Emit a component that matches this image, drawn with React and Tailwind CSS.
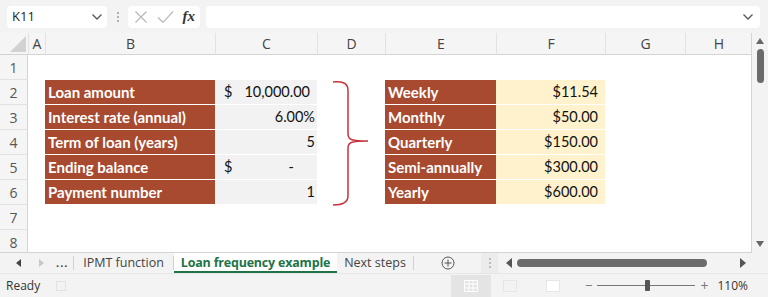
import React from "react";

const COLS = ["A", "B", "C", "D", "E", "F", "G", "H"];
const left = [
  ["Loan amount", "$", "10,000.00"],
  ["Interest rate (annual)", "", "6.00%"],
  ["Term of loan (years)", "", "5"],
  ["Ending balance", "$", "-"],
  ["Payment number", "", "1"],
];
const right = [
  ["Weekly", "$11.54"],
  ["Monthly", "$50.00"],
  ["Quarterly", "$150.00"],
  ["Semi-annually", "$300.00"],
  ["Yearly", "$600.00"],
];

const ui = { fontFamily: '"Open Sans", "Noto Sans", sans-serif' };
const cell = { fontFamily: 'Lato, "Open Sans", sans-serif' };

function Chevron({ className }) {
  return (
    <svg width="12" height="8" viewBox="0 0 12 8" className={className}>
      <path d="M1.5 1.5 L6 6 L10.5 1.5" fill="none" stroke="#555" strokeWidth="1.3" />
    </svg>
  );
}

function TopBar() {
  return (
    <div className="h-[33px] bg-[#f3f3f3] flex items-center pl-[7px] pr-[8px]" style={ui}>
      <div className="w-[100px] h-[22px] bg-white rounded-[4px] flex items-center justify-between pl-[5px] pr-[4px] text-[13px] text-[#222]">
        <span>K11</span>
        <Chevron />
      </div>
      <div className="w-[21px] flex flex-col items-center gap-[2px]">
        <span className="w-[2px] h-[2px] bg-[#999] rounded-full" />
        <span className="w-[2px] h-[2px] bg-[#999] rounded-full" />
        <span className="w-[2px] h-[2px] bg-[#999] rounded-full" />
      </div>
      <div className="w-[72px] h-[22px] bg-white rounded-[4px] flex items-center justify-between pl-[6px] pr-[5px]">
        <svg width="14" height="14" viewBox="0 0 14 14">
          <path d="M1.5 1.5 L12.5 12.5 M12.5 1.5 L1.5 12.5" stroke="#b8b8b8" strokeWidth="1.2" />
        </svg>
        <svg width="17" height="14" viewBox="0 0 17 14">
          <path d="M1 7.5 L6 12.5 L16 1.5" fill="none" stroke="#b8b8b8" strokeWidth="1.2" />
        </svg>
        <span className="text-[15px] italic font-bold text-[#333]" style={{ fontFamily: '"Liberation Serif", serif' }}>
          fx
        </span>
      </div>
      <div className="ml-[6px] flex-1 h-[22px] bg-white rounded-[4px] flex items-center justify-end pr-[6px]">
        <Chevron />
      </div>
    </div>
  );
}

function Sheet() {
  return (
    <div className="flex h-[220px]">
      <div className="relative flex-1 overflow-hidden border-r border-b border-[#d4d4d4]">
        <div className="grid grid-cols-[28px_17px_170px_102px_68px_111px_109px_80px_67px] grid-rows-[22px_repeat(8,25px)]">
          <div className="bg-[#f5f5f5] border-b border-[#d4d4d4] relative">
            <svg width="16" height="16" viewBox="0 0 16 16" className="absolute right-[2px] bottom-[2px]">
              <path d="M16 0 L16 16 L0 16 Z" fill="#d2d2d2" />
            </svg>
          </div>
          {COLS.map((c) => (
            <div
              key={c}
              className="bg-[#f5f5f5] border-b border-l border-[#e2e2e2] border-b-[#d4d4d4] flex items-center justify-center text-[14px] text-[#444]"
              style={ui}
            >
              {c}
            </div>
          ))}
          {Array.from({ length: 8 }).map((_, r) => {
            const row = r + 1;
            const li = row - 2;
            const hasData = li >= 0 && li < 5;
            return (
              <React.Fragment key={row}>
                <div
                  className="bg-[#f5f5f5] border-b border-r border-[#e2e2e2] border-r-[#d4d4d4] flex items-center justify-center text-[14px] text-[#555]"
                  style={ui}
                >
                  {row}
                </div>
                <div />
                {hasData ? (
                  <>
                    <div
                      className="bg-[#a84a2f] border-b border-white text-white font-bold text-[15px] flex items-center pl-[3px] whitespace-nowrap"
                      style={cell}
                    >
                      {left[li][0]}
                    </div>
                    <div
                      className="bg-[#f2f2f2] border-b border-white text-[#111] text-[14.5px] flex items-center justify-between pl-[9px] pr-[2px]"
                      style={cell}
                    >
                      <span>{left[li][1]}</span>
                      <span className={left[li][2] === "-" ? "pr-[21px]" : left[li][2] === "10,000.00" ? "pr-[5px]" : ""}>
                        {left[li][2]}
                      </span>
                    </div>
                    <div />
                    <div
                      className="bg-[#a84a2f] border-b border-white text-white font-bold text-[15px] flex items-center pl-[3px] whitespace-nowrap"
                      style={cell}
                    >
                      {right[li][0]}
                    </div>
                    <div
                      className="bg-[#fff2cc] border-b border-white text-[#111] text-[14.5px] flex items-center justify-end pr-[7px]"
                      style={cell}
                    >
                      {right[li][1]}
                    </div>
                    <div />
                    <div />
                  </>
                ) : (
                  <>
                    <div />
                    <div />
                    <div />
                    <div />
                    <div />
                    <div />
                    <div />
                  </>
                )}
              </React.Fragment>
            );
          })}
        </div>
        <svg className="absolute left-[330px] top-[47px]" width="42" height="128" viewBox="0 0 42 128">
          <path
            d="M3 2 C12 1 18 3 18 10 L18 54 C18 60 22 61 38 61 C22 61 18 62 18 68 L18 116 C18 123 12 125 3 125"
            fill="none"
            stroke="#c9333b"
            strokeWidth="1.5"
          />
        </svg>
      </div>
      <div className="w-[16px] bg-[#f3f3f3] flex flex-col items-center pt-[4px]">
        <svg width="10" height="8" viewBox="0 0 10 8">
          <path d="M5 1 L9 7 L1 7 Z" fill="#666" />
        </svg>
        <div className="mt-[4px] w-[7px] h-[34px] rounded-full bg-[#6b6b6b]" />
        <div className="flex-1" />
        <svg width="10" height="8" viewBox="0 0 10 8" className="mb-[5px]">
          <path d="M1 1 L9 1 L5 7 Z" fill="#666" />
        </svg>
      </div>
    </div>
  );
}

function Divider() {
  return <div className="w-[1px] my-[3px] bg-[#d0d0d0]" />;
}

function Tabs() {
  return (
    <div className="h-[20px] bg-[#f3f3f3] flex items-stretch text-[12.5px]" style={ui}>
      <div className="w-[73px] flex items-center">
        <svg width="6" height="8" viewBox="0 0 6 8" className="ml-[16px]">
          <path d="M5 0 L0 4 L5 8 Z" fill="#444" />
        </svg>
        <svg width="6" height="8" viewBox="0 0 6 8" className="ml-[16px]">
          <path d="M1 0 L6 4 L1 8 Z" fill="#c8c8c8" />
        </svg>
        <span className="ml-[12px] text-[#444] tracking-[1px] font-bold text-[11px]">...</span>
      </div>
      <Divider />
      <div className="w-[99px] flex items-center justify-center text-[#444] whitespace-nowrap">IPMT function</div>
      <Divider />
      <div className="w-[163px] bg-white flex items-center justify-center text-[#217346] font-bold border-b-2 border-[#217346] pt-[2px] whitespace-nowrap tracking-[-0.2px]">
        Loan frequency example
      </div>
      <div className="w-[76px] flex items-center justify-center text-[#444] whitespace-nowrap">Next steps</div>
      <Divider />
      <div className="w-[67px] flex items-center justify-center">
        <svg width="14" height="14" viewBox="0 0 14 14">
          <circle cx="7" cy="7" r="6" fill="none" stroke="#555" strokeWidth="1" />
          <path d="M7 3.5 L7 10.5 M3.5 7 L10.5 7" stroke="#555" strokeWidth="1" />
        </svg>
      </div>
      <div className="w-[17px] bg-[#ececec] flex flex-col items-center justify-center gap-[2px]">
        <span className="w-[2px] h-[2px] bg-[#aaa] rounded-full" />
        <span className="w-[2px] h-[2px] bg-[#aaa] rounded-full" />
        <span className="w-[2px] h-[2px] bg-[#aaa] rounded-full" />
      </div>
      <div className="flex-1 flex items-center pl-[8px] pr-[22px]">
        <svg width="7" height="10" viewBox="0 0 7 10">
          <path d="M6 0 L0 5 L6 10 Z" fill="#555" />
        </svg>
        <div className="ml-[4px] w-[190px] h-[8px] rounded-full bg-[#6b6b6b]" />
        <div className="flex-1" />
        <svg width="7" height="10" viewBox="0 0 7 10">
          <path d="M1 0 L7 5 L1 10 Z" fill="#555" />
        </svg>
      </div>
    </div>
  );
}

function Status() {
  return (
    <div className="h-[24px] bg-[#f3f3f3] flex items-center text-[12px] text-[#333] border-t border-[#e6e6e6]" style={ui}>
      <span className="ml-[6px] w-[40px]">Ready</span>
      <div className="ml-[10px] w-[10px] h-[10px] border border-[#e2e2e2]" />
      <div className="w-[385px]" />
      <div className="w-[40px] h-[22px] bg-[#e4e4e4] flex items-center justify-center">
        <svg width="14" height="12" viewBox="0 0 14 12">
          <path d="M0.5 0.5 H13.5 V11.5 H0.5 Z M0.5 4 H13.5 M0.5 8 H13.5 M5 0.5 V11.5 M9 0.5 V11.5" fill="none" stroke="#fff" strokeWidth="1" />
        </svg>
      </div>
      <div className="w-[38px] flex justify-center">
        <svg width="14" height="12" viewBox="0 0 14 12">
          <rect x="0.5" y="0.5" width="13" height="11" fill="none" stroke="#e6e6e6" />
        </svg>
      </div>
      <div className="w-[48px] flex justify-center">
        <svg width="14" height="12" viewBox="0 0 14 12">
          <rect x="0.5" y="0.5" width="13" height="11" fill="#fff" stroke="#e6e6e6" />
        </svg>
      </div>
      <span className="ml-[8px] text-[#777] text-[13px]">−</span>
      <div className="relative ml-[5px] w-[98px] h-[1px] bg-[#777]">
        <div className="absolute left-[48px] -top-[5px] w-[5px] h-[11px] bg-[#555] rounded-[1px]" />
      </div>
      <span className="ml-[5px] text-[#777] text-[14px]">+</span>
      <span className="ml-[9px] text-[#333]">110%</span>
    </div>
  );
}

export default function App() {
  return (
    <div className="w-[768px] h-[297px] overflow-hidden bg-white flex flex-col">
      <TopBar />
      <Sheet />
      <Tabs />
      <Status />
    </div>
  );
}
